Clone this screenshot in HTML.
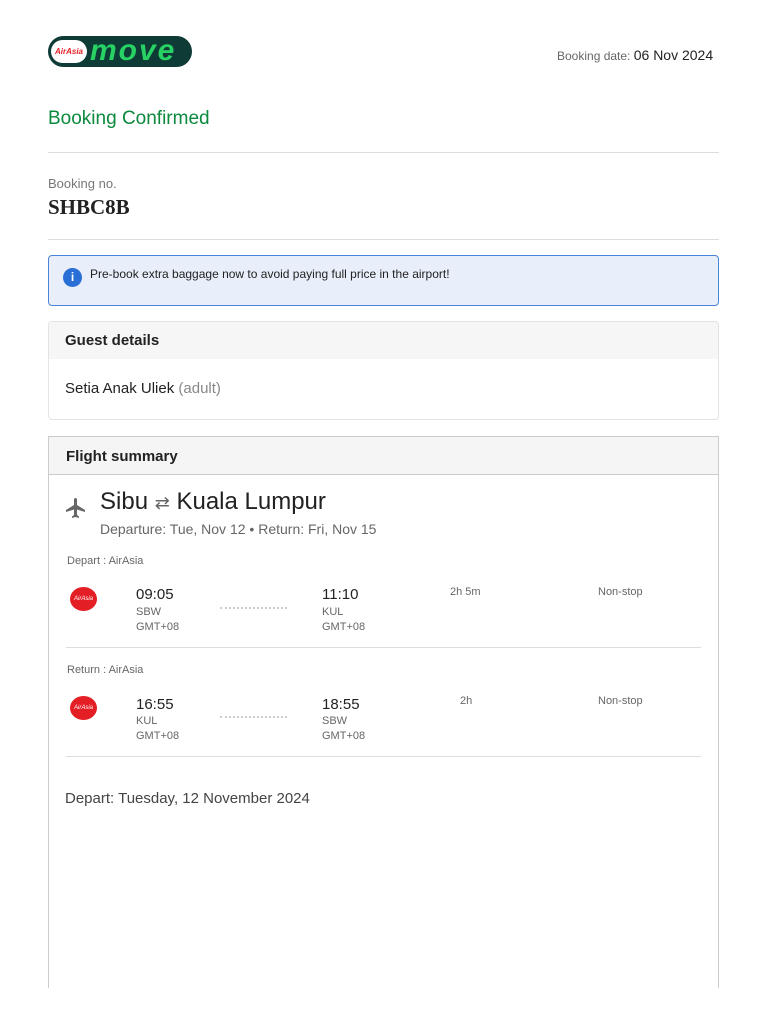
<!DOCTYPE html>
<html><head><meta charset="utf-8"><style>
*{margin:0;padding:0;box-sizing:border-box}
body{width:768px;height:1024px;background:#fff;font-family:"Liberation Sans",sans-serif;color:#222;position:relative;overflow:hidden}
.a{position:absolute;white-space:nowrap}
.g{color:#666}
</style></head><body>
<div class="a" style="left:48px;top:36px;width:144px;height:31px;background:#0f3b36;border-radius:16px"></div>
<div class="a" style="left:51px;top:40px;width:36px;height:23px;background:#fff;border-radius:12px;color:#e31e24;font-size:8px;font-style:italic;font-weight:bold;line-height:23px;text-align:center">AirAsia</div>
<div class="a" style="left:90px;top:33px;color:#27d163;font-size:30px;font-style:italic;font-weight:bold;letter-spacing:2px;line-height:36px">move</div>
<div class="a" style="left:557px;top:47px;font-size:12px;color:#666">Booking date: <span style="font-size:14px;color:#222">06 Nov 2024</span></div>
<div class="a" style="left:48px;top:108px;font-size:19px;color:#0b8a3e">Booking Confirmed</div>
<div class="a" style="left:48px;top:152px;width:671px;height:1px;background:#ddd"></div>
<div class="a" style="left:48px;top:176px;font-size:13px;color:#777">Booking no.</div>
<div class="a" style="left:48px;top:195px;font-size:21px;font-weight:bold;font-family:'Liberation Serif',serif">SHBC8B</div>
<div class="a" style="left:48px;top:239px;width:671px;height:1px;background:#ddd"></div>
<div class="a" style="left:48px;top:255px;width:671px;height:51px;background:#e8effa;border:1px solid #4a84d8;border-radius:4px"></div>
<div class="a" style="left:63px;top:268px;width:19px;height:19px;border-radius:50%;background:#2a6fd6;color:#fff;font-size:12px;font-weight:bold;text-align:center;line-height:19px">i</div>
<div class="a" style="left:90px;top:267px;font-size:12px">Pre-book extra baggage now to avoid paying full price in the airport!</div>
<div class="a" style="left:48px;top:321px;width:671px;height:99px;border:1px solid #e3e3e3;border-radius:4px;overflow:hidden"><div style="height:37px;background:#f6f6f6"></div></div>
<div class="a" style="left:65px;top:332px;font-size:15px;font-weight:bold">Guest details</div>
<div class="a" style="left:65px;top:380px;font-size:15px">Setia Anak Uliek <span style="color:#888">(adult)</span></div>
<div class="a" style="left:48px;top:436px;width:671px;height:552px;border:1px solid #ccc;border-bottom:none"><div style="height:38px;background:#f5f5f5;border-bottom:1px solid #ccc"></div></div>
<div class="a" style="left:66px;top:448px;font-size:15px;font-weight:bold">Flight summary</div>
<svg class="a" style="left:64px;top:496px" width="24" height="24" viewBox="0 0 24 24"><path fill="#666" d="M21 16v-2l-8-5V3.5C13 2.7 12.3 2 11.5 2S10 2.7 10 3.5V9l-8 5v2l8-2.5V19l-2 1.5V22l3.5-1 3.5 1v-1.5L13 19v-5.5z"/></svg>
<div class="a" style="left:100px;top:488px;font-size:24px">Sibu <span style="color:#666;font-size:18px">⇄</span> Kuala Lumpur</div>
<div class="a g" style="left:100px;top:521px;font-size:14px">Departure: Tue, Nov 12 • Return: Fri, Nov 15</div>
<div class="a g" style="left:67px;top:555px;font-size:11px">Depart : AirAsia</div>
<div class="a" style="left:70px;top:587px;width:27px;height:24px;border-radius:50%;background:#e31e24;color:#fff;font-size:6px;font-style:italic;text-align:center;line-height:24px">AirAsia</div>
<div class="a" style="left:136px;top:586px;font-size:15px">09:05</div>
<div class="a g" style="left:136px;top:605px;font-size:11px;line-height:15px">SBW<br>GMT+08</div>
<div class="a" style="left:220px;top:607px;width:67px;border-top:2px dotted #ccc"></div>
<div class="a" style="left:322px;top:586px;font-size:15px">11:10</div>
<div class="a g" style="left:322px;top:605px;font-size:11px;line-height:15px">KUL<br>GMT+08</div>
<div class="a g" style="left:450px;top:586px;font-size:11px">2h 5m</div>
<div class="a g" style="left:598px;top:586px;font-size:11px">Non-stop</div>
<div class="a" style="left:66px;top:647px;width:635px;height:1px;background:#ddd"></div>
<div class="a g" style="left:67px;top:664px;font-size:11px">Return : AirAsia</div>
<div class="a" style="left:70px;top:696px;width:27px;height:24px;border-radius:50%;background:#e31e24;color:#fff;font-size:6px;font-style:italic;text-align:center;line-height:24px">AirAsia</div>
<div class="a" style="left:136px;top:696px;font-size:15px">16:55</div>
<div class="a g" style="left:136px;top:714px;font-size:11px;line-height:15px">KUL<br>GMT+08</div>
<div class="a" style="left:220px;top:716px;width:67px;border-top:2px dotted #ccc"></div>
<div class="a" style="left:322px;top:696px;font-size:15px">18:55</div>
<div class="a g" style="left:322px;top:714px;font-size:11px;line-height:15px">SBW<br>GMT+08</div>
<div class="a g" style="left:460px;top:695px;font-size:11px">2h</div>
<div class="a g" style="left:598px;top:695px;font-size:11px">Non-stop</div>
<div class="a" style="left:66px;top:756px;width:635px;height:1px;background:#ddd"></div>
<div class="a" style="left:65px;top:790px;font-size:15px;color:#444">Depart: Tuesday, 12 November 2024</div>
</body></html>
